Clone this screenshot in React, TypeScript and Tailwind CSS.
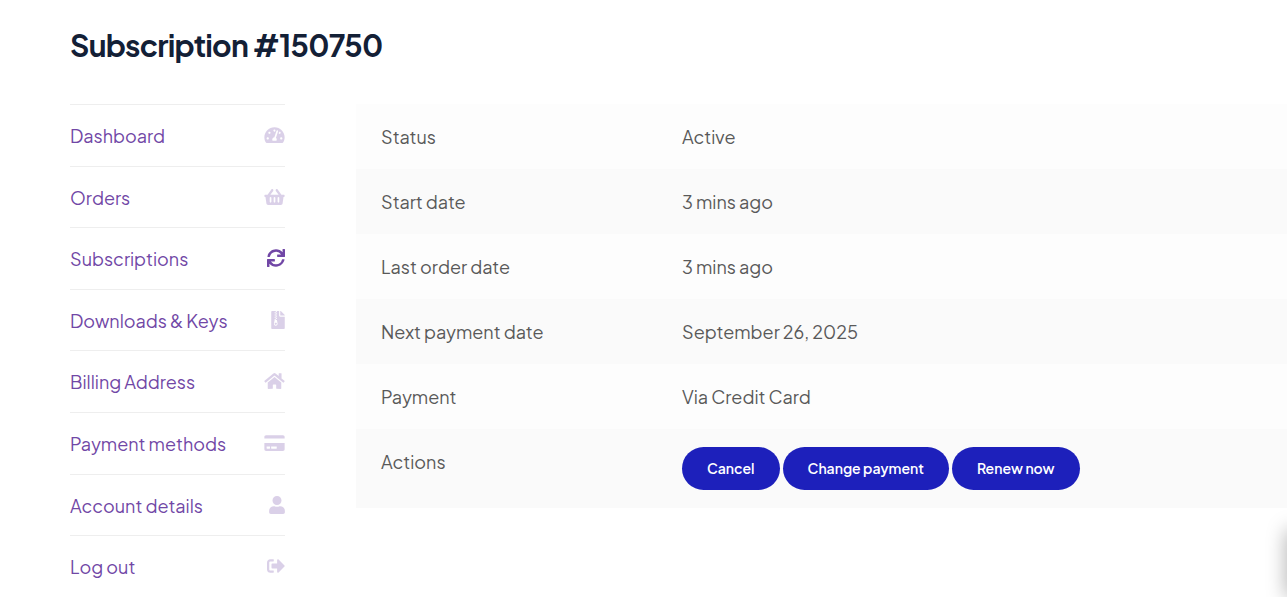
import type { IconType } from "react-icons";
import {
  FaCreditCard,
  FaFileArchive,
  FaHome,
  FaShoppingBasket,
  FaSignOutAlt,
  FaSync,
  FaTachometerAlt,
  FaUser,
} from "react-icons/fa";

type NavItem = {
  label: string;
  icon: IconType;
  iconWidth: string;
  active?: boolean;
};

const navItems: NavItem[] = [
  { label: "Dashboard", icon: FaTachometerAlt, iconWidth: "w-[21px]" },
  { label: "Orders", icon: FaShoppingBasket, iconWidth: "w-[21px]" },
  { label: "Subscriptions", icon: FaSync, iconWidth: "w-[18px]", active: true },
  { label: "Downloads & Keys", icon: FaFileArchive, iconWidth: "w-[14px]" },
  { label: "Billing Address", icon: FaHome, iconWidth: "w-[21px]" },
  { label: "Payment methods", icon: FaCreditCard, iconWidth: "w-[21px]" },
  { label: "Account details", icon: FaUser, iconWidth: "w-[16px]" },
  { label: "Log out", icon: FaSignOutAlt, iconWidth: "w-[18px]" },
];

const details = [
  { label: "Status", value: "Active" },
  { label: "Start date", value: "3 mins ago" },
  { label: "Last order date", value: "3 mins ago" },
  { label: "Next payment date", value: "September 26, 2025" },
  { label: "Payment", value: "Via Credit Card" },
];

const actions = ["Cancel", "Change payment", "Renew now"];

function AccountNav() {
  return (
    <nav aria-label="Account" className="w-[215px] shrink-0">
      <ul>
        {navItems.map(({ label, icon: Icon, iconWidth, active }) => (
          <li key={label} className="border-t border-[#eeeeee]">
            <a
              href="#"
              aria-current={active ? "page" : undefined}
              className="flex items-start justify-between pt-4 pb-[14px] text-lg leading-[1.7] text-[#7147a6]"
            >
              {label}
              <Icon
                aria-hidden="true"
                className={`mt-[5px] h-[18px] ${iconWidth} ${active ? "" : "opacity-25"}`}
              />
            </a>
          </li>
        ))}
      </ul>
    </nav>
  );
}

function SubscriptionTable() {
  return (
    <table className="min-w-0 flex-1 table-fixed text-left text-lg text-[#595959]">
      <tbody>
        {details.map(({ label, value }) => (
          <tr key={label} className="h-[65px] odd:bg-[#fdfdfd] even:bg-[#fafafa]">
            <th scope="row" className="w-[301px] px-[25px] font-normal">{label}</th>
            <td className="px-[25px]">{value}</td>
          </tr>
        ))}
        <tr className="bg-[#fafafa] align-top">
          <th scope="row" className="px-[25px] py-[18px] leading-[30px] font-normal">Actions</th>
          <td className="px-[25px] py-[18px]">
            <div className="flex flex-wrap gap-[3px]">
              {actions.map((action) => (
                <button
                  key={action}
                  type="button"
                  className="rounded-full bg-[#1d20bb] px-[25px] py-3 text-sm leading-[19px] font-semibold text-white"
                >
                  {action}
                </button>
              ))}
            </div>
          </td>
        </tr>
      </tbody>
    </table>
  );
}

export default function App() {
  return (
    <main className="relative min-h-screen overflow-hidden bg-white pl-[70px] font-['Plus_Jakarta_Sans',Inter,sans-serif]">
      <h1 className="pt-[25px] pb-[39px] text-3xl leading-10 font-bold tracking-tight text-[#132036]">
        Subscription #150750
      </h1>
      <div className="flex items-start gap-[71px]">
        <AccountNav />
        <SubscriptionTable />
      </div>
      <div className="fixed top-[530px] -right-4 bottom-0 w-4 shadow-[0_0_20px_rgba(0,0,0,0.35)]" />
    </main>
  );
}
